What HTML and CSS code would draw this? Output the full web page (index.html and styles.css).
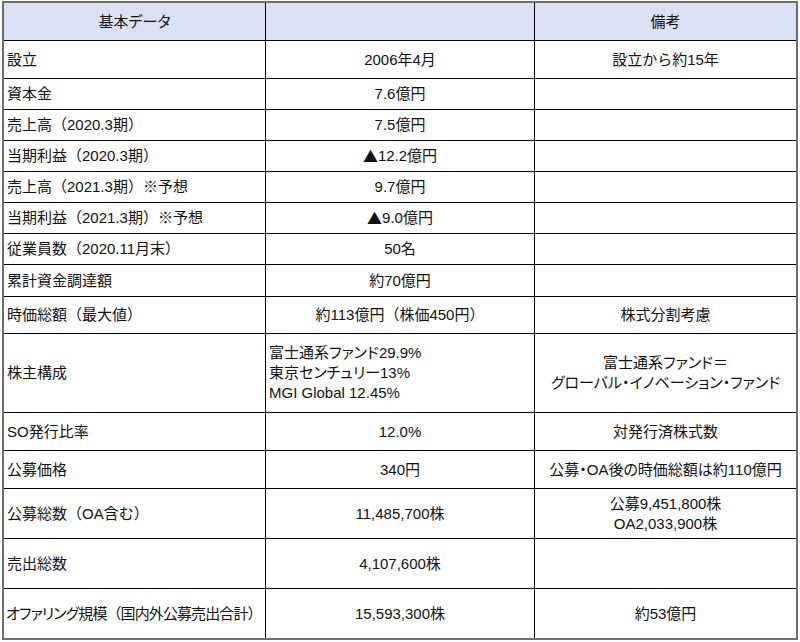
FILE: index.html
```html
<!DOCTYPE html>
<html lang="ja">
<head>
<meta charset="utf-8">
<link rel="stylesheet" href="styles.css">
</head>
<body>
<div class="frame">
  <div class="grid">
    <div class="cell hd pa">基本データ</div><div class="cell hd"></div><div class="cell hd">備考</div>
    <div class="cell lab">設立</div><div class="cell">2006年4月</div><div class="cell">設立から約15年</div>
    <div class="cell lab">資本金</div><div class="cell">7.6億円</div><div class="cell"></div>
    <div class="cell lab">売上高（2020.3期）</div><div class="cell">7.5億円</div><div class="cell"></div>
    <div class="cell lab">当期利益（2020.3期）</div><div class="cell"><span class="tri">▲</span>12.2億円</div><div class="cell"></div>
    <div class="cell lab">売上高（2021.3期）※予想</div><div class="cell">9.7億円</div><div class="cell"></div>
    <div class="cell lab">当期利益（2021.3期）※予想</div><div class="cell"><span class="tri">▲</span>9.0億円</div><div class="cell"></div>
    <div class="cell lab">従業員数（2020.11月末）</div><div class="cell">50名</div><div class="cell"></div>
    <div class="cell lab">累計資金調達額</div><div class="cell">約70億円</div><div class="cell"></div>
    <div class="cell lab">時価総額（最大値）</div><div class="cell">約113億円（株価450円）</div><div class="cell">株式分割考慮</div>
    <div class="cell lab">株主構成</div>
    <div class="cell lab">
      <div class="lines"><span class="pa">富士通系ファンド29.9%</span><span class="pa">東京センチュリー13%</span><span>MGI Global 12.45%</span></div>
    </div>
    <div class="cell"><div class="lines ctr"><span class="pa">富士通系ファンド＝</span><span class="pa">グローバル・イノベーション・ファンド</span></div></div>
    <div class="cell lab">SO発行比率</div><div class="cell">12.0%</div><div class="cell">対発行済株式数</div>
    <div class="cell lab">公募価格</div><div class="cell">340円</div><div class="cell pa">公募・OA後の時価総額は約110億円</div>
    <div class="cell lab">公募総数（OA含む）</div><div class="cell">11,485,700株</div>
    <div class="cell"><div class="lines ctr"><span>公募9,451,800株</span><span>OA2,033,900株</span></div></div>
    <div class="cell lab">売出総数</div><div class="cell">4,107,600株</div><div class="cell"></div>
    <div class="cell lab tight"><span class="pa">オファリング</span>規模（国内外公募売出合計）</div><div class="cell">15,593,300株</div><div class="cell">約53億円</div>
  </div>
</div>
</body>
</html>
```

FILE: styles.css
```css
html, body {
  margin: 0;
  padding: 0;
  background: #ffffff;
}

body {
  font-family: "Liberation Sans", "Noto Sans CJK JP", sans-serif;
  font-size: 15px;
  color: #111111;
}

.frame {
  width: 792px;
  margin: 1px 0 0 2px;
  border: 2px solid #6e6e6e;
}

.grid {
  display: grid;
  grid-template-columns: 261px 268px 261px;
  grid-template-rows: 37px 37px 30px 30px 30px 30px 30px 30px 31px 36px 78px 37px 37px 49px 49px 49px;
  gap: 1px;
  background: #000000;
}

.cell {
  background: #ffffff;
  display: flex;
  align-items: center;
  justify-content: center;
  line-height: 20px;
  white-space: nowrap;
  overflow: hidden;
}

.hd {
  background: #d9e1f2;
}

.lab {
  justify-content: flex-start;
  padding-left: 3px;
}

.tight {
  padding-left: 2px;
  letter-spacing: -0.9px;
}

.lines {
  display: flex;
  flex-direction: column;
}

.ctr {
  align-items: center;
}

.pa {
  font-feature-settings: "palt";
}

.tri {
  font-family: "Noto Sans CJK JP", sans-serif;
}
```
